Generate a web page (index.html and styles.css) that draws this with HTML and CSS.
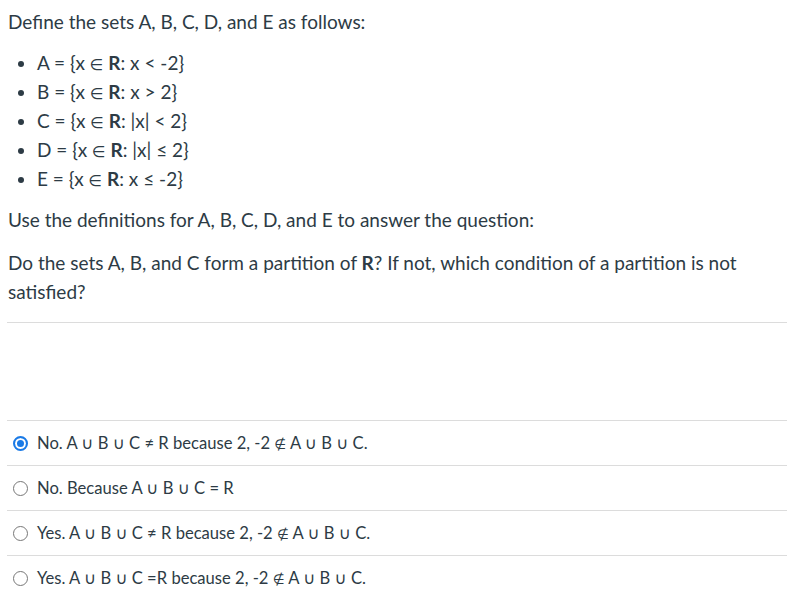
FILE: index.html
```html
<!DOCTYPE html>
<html>
<head>
<meta charset="utf-8">
<link rel="stylesheet" href="styles.css">
</head>
<body>
<div class="question">
  <p class="intro">Define the sets A, B, C, D, and E as follows:</p>
  <ul class="sets">
    <li>A = {x <span class="op">∈</span> <b>R</b>: x &lt; -2}</li>
    <li>B = {x <span class="op">∈</span> <b>R</b>: x &gt; 2}</li>
    <li>C = {x <span class="op">∈</span> <b>R</b>: |x| &lt; 2}</li>
    <li>D = {x <span class="op">∈</span> <b>R</b>: |x| ≤ 2}</li>
    <li>E = {x <span class="op">∈</span> <b>R</b>: x ≤ -2}</li>
  </ul>
  <p class="use">Use the definitions for A, B, C, D, and E to answer the question:</p>
  <p class="ask">Do the sets A, B, and C form a partition of <b>R</b>? If not, which condition of a partition is not satisfied?</p>
  <div class="rule"></div>
  <div class="answers">
    <div class="answer"><span class="radio checked"></span><span class="label">No. A ∪ B ∪ C ≠ R because 2, -2 <span class="op">∉</span> A ∪ B ∪ C.</span></div>
    <div class="answer"><span class="radio"></span><span class="label">No. Because A ∪ B ∪ C = R</span></div>
    <div class="answer"><span class="radio"></span><span class="label">Yes. A ∪ B ∪ C ≠ R because 2, -2 <span class="op">∉</span> A ∪ B ∪ C.</span></div>
    <div class="answer"><span class="radio"></span><span class="label">Yes. A ∪ B ∪ C =R because 2, -2 <span class="op">∉</span> A ∪ B ∪ C.</span></div>
  </div>
</div>
</body>
</html>
```
FILE: styles.css
```css
html, body {
  margin: 0;
  padding: 0;
  background: #ffffff;
}
body {
  font-family: Lato, "Noto Sans", "DejaVu Sans", sans-serif;
  font-size: 19px;
  line-height: 29px;
  color: #2d3b45;
}
.question {
  padding: 7px 5px 0 7px;
}
p {
  margin: 0;
  padding-left: 1px;
}
b {
  font-weight: 700;
}
.op {
  font-size: 0.82em;
  line-height: 1;
}
.sets {
  margin: 12px 0 12px 0;
  padding-left: 30px;
}
.use {
  margin-bottom: 14px;
}
.rule {
  margin-top: 16px;
  border-top: 1px solid #dcdcdc;
}
.answers {
  margin-top: 97px;
}
.answer {
  display: flex;
  align-items: center;
  height: 44px;
  border-top: 1px solid #dcdcdc;
}
.radio {
  box-sizing: border-box;
  width: 15px;
  height: 15px;
  margin-left: 6px;
  margin-right: 9px;
  border-radius: 50%;
  border: 1.5px solid #777777;
  background: #fff;
  flex: none;
}
.radio.checked {
  border: 2px solid #1a7ae6;
  box-shadow: inset 0 0 0 2px #fff, inset 0 0 0 8px #1a7ae6;
}
.label {
  font-size: 16.6px;
  line-height: 24px;
  white-space: nowrap;
}
```
